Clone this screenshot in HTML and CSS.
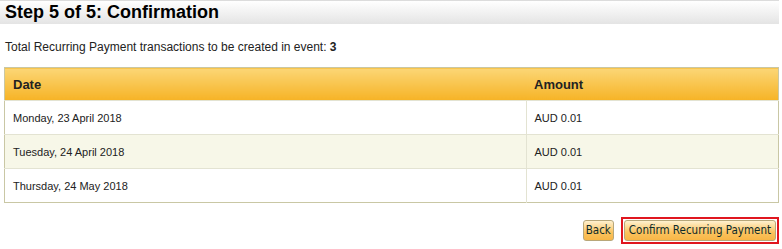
FILE: index.html
```html
<!DOCTYPE html>
<html>
<head>
<meta charset="utf-8">
<link rel="stylesheet" href="styles.css">
</head>
<body>
<div class="page">
  <h1 class="title">Step 5 of 5: Confirmation</h1>
  <p class="summary">Total Recurring Payment transactions to be created in event: <b>3</b></p>
  <table class="grid">
    <thead>
      <tr><th class="c-date">Date</th><th class="c-amt">Amount</th></tr>
    </thead>
    <tbody>
      <tr><td>Monday, 23 April 2018</td><td>AUD 0.01</td></tr>
      <tr class="alt"><td>Tuesday, 24 April 2018</td><td>AUD 0.01</td></tr>
      <tr><td>Thursday, 24 May 2018</td><td>AUD 0.01</td></tr>
    </tbody>
  </table>
  <div class="actions">
    <button class="btn btn-back">Back</button>
    <span class="highlight"><button class="btn btn-confirm">Confirm Recurring Payment</button></span>
  </div>
</div>
</body>
</html>
```

FILE: styles.css
```css
html, body {
  margin: 0;
  padding: 0;
  background: #fff;
}
.page {
  width: 782px;
  font-family: "Liberation Sans", Arial, sans-serif;
  color: #222;
}
.title {
  margin: 0;
  height: 23px;
  width: 774px;
  border-top: 1px solid #dcdcdc;
  background: linear-gradient(#ffffff, #e4e4e4);
  font-size: 18px;
  font-weight: bold;
  line-height: 23px;
  padding-left: 5px;
  box-sizing: content-box;
  color: #000;
}
.summary {
  margin: 16px 0 0 5px;
  font-size: 12px;
  line-height: 14px;
  color: #222;
}
.summary b { font-weight: bold; }
.grid {
  margin: 13px 0 0 4px;
  width: 775px;
  border-collapse: collapse;
  border: 1px solid #c9c7a4;
}
.grid th {
  height: 32px;
  padding: 0 0 0 8px;
  text-align: left;
  font-size: 13px;
  font-weight: bold;
  color: #222;
  background: linear-gradient(#fbd676, #f6b326);
}
.grid .c-date { width: 513px; }
.grid td {
  height: 33px;
  padding: 0 0 0 8px;
  font-size: 11px;
  color: #222;
  border-top: 1px solid #e3e3d2;
  background: #fff;
}
.grid td + td {
  border-left: 1px solid #e3e3d2;
}
.grid tr.alt td {
  background: #f7f7e8;
}
.actions {
  display: flex;
  justify-content: flex-end;
  align-items: center;
  gap: 7px;
  margin-top: 14px;
  width: 779px;
}
.highlight {
  display: inline-flex;
  border: 2px solid #e0161f;
  padding: 1px;
}
.btn {
  font-family: "DejaVu Sans Condensed", "DejaVu Sans", sans-serif;
  font-size: 11.5px;
  color: #0d2a2a;
  height: 21px;
  padding: 0 4px;
  border: 1px solid #b8a77a;
  border-radius: 3px;
  background: linear-gradient(#fff1cf, #fbc35e 60%, #f8b646);
  margin: 0;
  line-height: 19px;
}
.btn-back {
  padding: 0 2px;
}
```
